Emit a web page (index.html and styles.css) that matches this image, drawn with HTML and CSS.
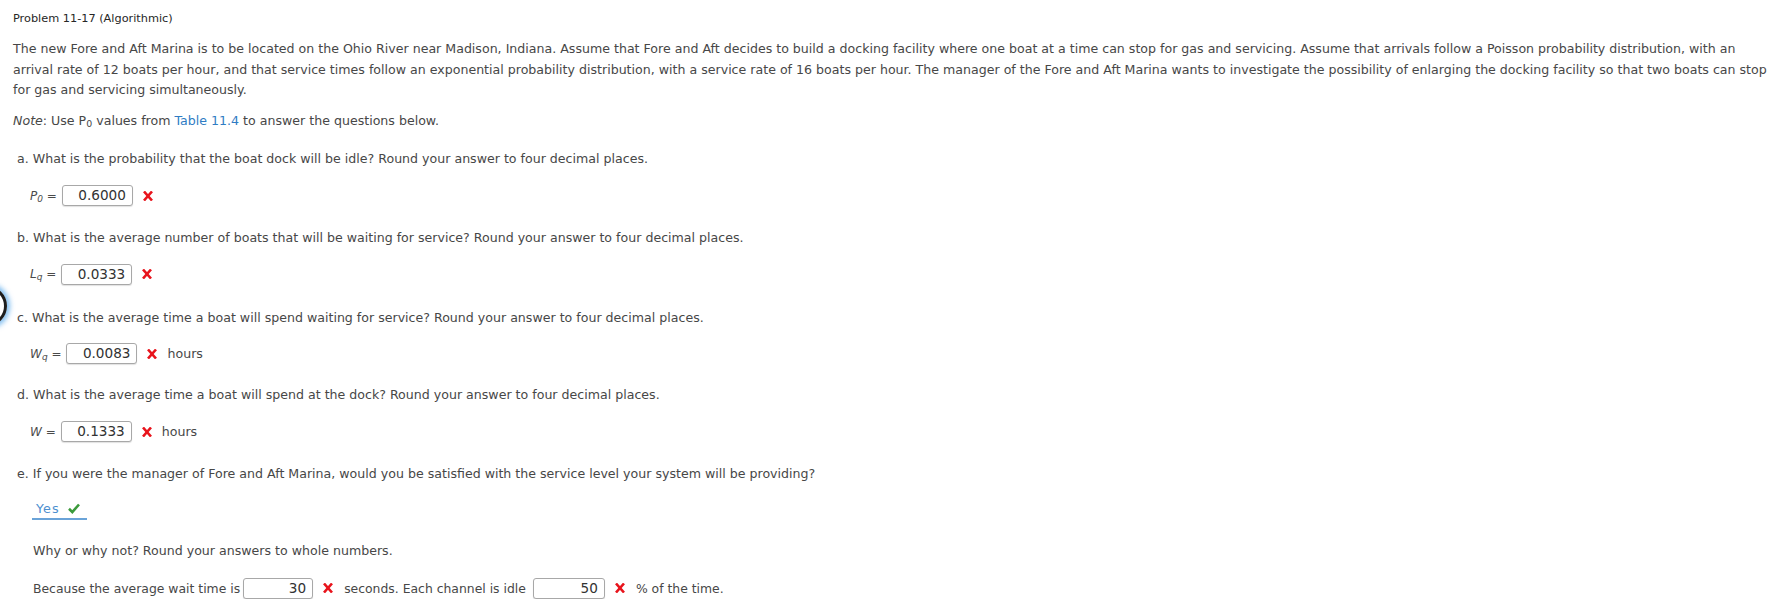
FILE: index.html
```html
<!DOCTYPE html>
<html lang="en">
<head>
<meta charset="utf-8">
<title>Problem 11-17 (Algorithmic)</title>
<link rel="stylesheet" href="styles.css">
</head>
<body>
<div class="focus-ring"></div>
<main class="problem">
  <h1 class="title">Problem 11-17 (Algorithmic)</h1>
  <p class="intro">The new Fore and Aft Marina is to be located on the Ohio River near Madison, Indiana. Assume that Fore and Aft decides to build a docking facility where one boat at a time can stop for gas and servicing. Assume that arrivals follow a Poisson probability distribution, with an arrival rate of 12 boats per hour, and that service times follow an exponential probability distribution, with a service rate of 16 boats per hour. The manager of the Fore and Aft Marina wants to investigate the possibility of enlarging the docking facility so that two boats can stop for gas and servicing simultaneously.</p>
  <p class="note"><em>Note</em>: Use P<sub>0</sub> values from <a class="link" href="#">Table 11.4</a> to answer the questions below.</p>

  <section class="part part-a">
    <p class="question">a. What is the probability that the boat dock will be idle? Round your answer to four decimal places.</p>
    <div class="answer-row">
      <span class="label"><i>P<sub>0</sub></i> =</span>
      <span class="field">0.6000</span>
      <svg class="wrong" viewBox="0 0 10 10" width="10" height="10"><path d="M1 0.5 L9 9.5 M9 0.5 L1 9.5" /></svg>
    </div>
  </section>

  <section class="part">
    <p class="question">b. What is the average number of boats that will be waiting for service? Round your answer to four decimal places.</p>
    <div class="answer-row">
      <span class="label"><i>L<sub>q</sub></i> =</span>
      <span class="field">0.0333</span>
      <svg class="wrong" viewBox="0 0 10 10" width="10" height="10"><path d="M1 0.5 L9 9.5 M9 0.5 L1 9.5" /></svg>
    </div>
  </section>

  <section class="part part-c">
    <p class="question">c. What is the average time a boat will spend waiting for service? Round your answer to four decimal places.</p>
    <div class="answer-row">
      <span class="label"><i>W<sub>q</sub></i> =</span>
      <span class="field">0.0083</span>
      <svg class="wrong" viewBox="0 0 10 10" width="10" height="10"><path d="M1 0.5 L9 9.5 M9 0.5 L1 9.5" /></svg>
      <span class="unit">hours</span>
    </div>
  </section>

  <section class="part part-d">
    <p class="question">d. What is the average time a boat will spend at the dock? Round your answer to four decimal places.</p>
    <div class="answer-row">
      <span class="label"><i>W</i> =</span>
      <span class="field">0.1333</span>
      <svg class="wrong" viewBox="0 0 10 10" width="10" height="10"><path d="M1 0.5 L9 9.5 M9 0.5 L1 9.5" /></svg>
      <span class="unit">hours</span>
    </div>
  </section>

  <section class="part">
    <p class="question">e. If you were the manager of Fore and Aft Marina, would you be satisfied with the service level your system will be providing?</p>
    <div class="choice">
      <span class="choice-text">Yes</span>
      <svg class="right" viewBox="0 0 12 11" width="12" height="11"><path d="M1 5.8 L4.3 9 L11 1.5" /></svg>
    </div>
    <p class="why">Why or why not? Round your answers to whole numbers.</p>
    <div class="fill-row">
      <span>Because the average wait time is</span>
      <span class="field field-int">30</span>
      <svg class="wrong" viewBox="0 0 10 10" width="10" height="10"><path d="M1 0.5 L9 9.5 M9 0.5 L1 9.5" /></svg>
      <span class="after">seconds. Each channel is idle</span>
      <span class="field field-int field-wide">50</span>
      <svg class="wrong" viewBox="0 0 10 10" width="10" height="10"><path d="M1 0.5 L9 9.5 M9 0.5 L1 9.5" /></svg>
      <span class="after">% of the time.</span>
    </div>
  </section>
</main>
</body>
</html>
```

FILE: styles.css
```css
html, body {
  margin: 0;
  padding: 0;
  background: #ffffff;
}

body {
  font-family: "DejaVu Sans", Verdana, sans-serif;
  font-size: 12.6px;
  color: #474747;
  overflow: hidden;
}

.focus-ring {
  position: absolute;
  left: -33px;
  top: 286px;
  width: 34px;
  height: 34px;
  border: 3px solid #1d1d1d;
  border-radius: 50%;
  box-shadow: 0 0 5px 3px rgba(90, 170, 235, 0.75);
}

.problem {
  padding: 9px 0 0 13px;
}

.title {
  margin: 0;
  font-size: 11.3px;
  font-weight: normal;
  line-height: 20px;
  color: #262626;
}

.intro {
  margin: 10px 0 0;
  line-height: 20.5px;
}

.note {
  margin: 10px 0 0;
  line-height: 20.5px;
}

sub {
  font-size: 0.75em;
  line-height: 0;
  vertical-align: -0.25em;
}

.link {
  color: #2f7cc4;
  text-decoration: none;
}

.part {
  margin-top: 21.5px;
  padding-left: 4px;
}

.part-a {
  margin-top: 18px;
}

.part-c {
  margin-top: 23px;
}

.part-d {
  margin-top: 21px;
}

.question {
  margin: 0;
  line-height: 20px;
}

.answer-row {
  display: flex;
  align-items: center;
  margin-top: 16px;
  padding-left: 13px;
  height: 21px;
}

.part-c .answer-row {
  margin-top: 15.5px;
}

.label {
  font-size: 12px;
  margin-right: 5px;
  color: #4a4a4a;
}

.label i {
  font-style: italic;
}

.field {
  box-sizing: border-box;
  width: 71px;
  height: 21px;
  border: 1px solid #a8a8a8;
  border-radius: 3px;
  box-shadow: 0 1px 1px rgba(0, 0, 0, 0.12);
  font-size: 13.6px;
  line-height: 19px;
  text-align: right;
  padding-right: 6px;
  color: #333;
  background: #fff;
}

.wrong {
  margin-left: 10px;
  flex: none;
}

.wrong path {
  stroke: #e8141c;
  stroke-width: 2.6;
  fill: none;
}

.unit {
  margin-left: 10px;
}

.choice {
  display: flex;
  align-items: center;
  gap: 8px;
  width: 51px;
  margin: 15px 0 0 15px;
  padding-left: 4px;
  height: 19px;
  border-bottom: 2px solid #6aa3d8;
}

.choice-text {
  color: #4d8fcf;
  font-size: 12.8px;
  letter-spacing: 1px;
}

.right path {
  stroke: #3b9a3b;
  stroke-width: 2.6;
  fill: none;
}

.why {
  margin: 21px 0 0 16px;
  line-height: 20px;
}

.fill-row {
  display: flex;
  align-items: center;
  margin-top: 17px;
  padding-left: 16px;
  height: 21px;
  font-size: 12.4px;
}

.fill-row .field {
  margin-left: 3px;
  width: 70px;
}

.fill-row .field-wide {
  margin-left: 7px;
  width: 72px;
}

.after {
  margin-left: 11px;
}
```
